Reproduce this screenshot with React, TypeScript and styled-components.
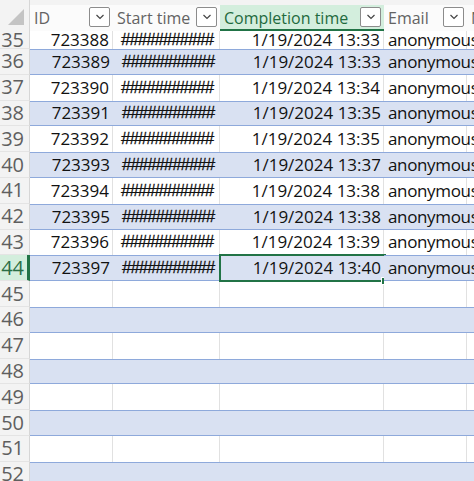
import React from 'react';
import styled, { createGlobalStyle } from 'styled-components';

const Global = createGlobalStyle`
  html, body { margin: 0; padding: 0; background: #ffffff; }
  body { font-family: "Open Sans", "Liberation Sans", sans-serif; }
`;

const COLS = '30px 83px 107px 164px 83px 1fr';
const BAND = '#d9e1f2';
const BAND_LINE = '#8ea9db';
const GRID = '#e1e1e1';
const GREEN = '#217346';
const GREEN_BG = '#d3eedd';

const Sheet = styled.div`
  width: 474px;
  height: 481px;
  overflow: hidden;
  background: #ffffff;
  display: flex;
  flex-direction: column;
`;

const HeaderRow = styled.div`
  display: grid;
  grid-template-columns: ${COLS};
  height: 31px;
  flex: none;
  background: #f3f3f3;
`;

const Corner = styled.div`
  background: #f3f3f3;
  border-right: 1px solid #d6d6d6;
  box-sizing: border-box;
  display: flex;
  align-items: flex-end;
  justify-content: flex-end;
  padding: 0 5px 6px 0;
`;

const HeaderCell = styled.div<{ $selected?: boolean }>`
  margin-top: 5px;
  display: flex;
  align-items: center;
  justify-content: space-between;
  padding: 0 3px 0 4px;
  box-sizing: border-box;
  background: ${(p) => (p.$selected ? GREEN_BG : '#fbfbfb')};
  color: ${(p) => (p.$selected ? '#1f6a3e' : '#636363')};
  border-bottom: 2px solid ${(p) => (p.$selected ? GREEN : 'transparent')};
  font-size: 16px;
  white-space: nowrap;
  overflow: hidden;
`;

const HeaderText = styled.span`
  line-height: 1;
  padding-top: 1px;
`;

const FilterButton = styled.div`
  width: 21px;
  height: 20px;
  flex: none;
  box-sizing: border-box;
  background: #ffffff;
  border: 1px solid #8c8c8c;
  border-radius: 2px;
  display: flex;
  align-items: center;
  justify-content: center;
`;

const Row = styled.div<{ $h: number }>`
  display: grid;
  grid-template-columns: ${COLS};
  height: ${(p) => p.$h}px;
  flex: none;
`;

const RowLabel = styled.div<{ $active?: boolean }>`
  background: ${(p) => (p.$active ? GREEN_BG : '#f3f3f3')};
  color: ${(p) => (p.$active ? '#2a6e45' : '#5f5f5f')};
  font-size: 20px;
  line-height: 1;
  display: flex;
  align-items: center;
  justify-content: flex-end;
  padding-right: ${(p) => (p.$active ? '3px' : '5px')};
  border-bottom: 1px solid #e4e4e4;
  border-right: ${(p) => (p.$active ? `3px solid ${GREEN}` : '1px solid #d6d6d6')};
  box-sizing: border-box;
  overflow: hidden;
  white-space: nowrap;
`;

const Cell = styled.div<{
  $band: boolean;
  $align?: 'left' | 'right';
  $last?: boolean;
  $overflow?: boolean;
}>`
  position: relative;
  box-sizing: border-box;
  background: ${(p) => (p.$band ? BAND : '#ffffff')};
  border-top: ${(p) => (p.$band ? `1px solid ${BAND_LINE}` : 'none')};
  border-bottom: ${(p) => (p.$band ? `1px solid ${BAND_LINE}` : 'none')};
  border-right: ${(p) => (p.$band || p.$last ? 'none' : `1px solid ${GRID}`)};
  display: flex;
  align-items: center;
  justify-content: ${(p) => (p.$align === 'right' ? 'flex-end' : 'flex-start')};
  padding: 0 ${(p) => (p.$align === 'right' ? '3px' : '0')} 0 ${(p) => (p.$align === 'right' ? '0' : '4px')};
  font-size: 17px;
  line-height: 18px;
  color: #111111;
  white-space: nowrap;
  overflow: ${(p) => (p.$overflow ? 'visible' : 'hidden')};
  z-index: ${(p) => (p.$overflow ? 1 : 0)};
`;

const EmailText = styled.span`
  letter-spacing: -0.35px;
`;

const Hashes = styled.span`
  font-family: "Liberation Sans", Arial, sans-serif;
  font-size: 17px;
  letter-spacing: -1.1px;
  padding-right: 3px;
  -webkit-text-stroke: 0.3px #111111;
`;

const Selection = styled.div`
  position: absolute;
  left: -1px;
  right: -2px;
  top: -2px;
  bottom: -2px;
  border: 2px solid ${GREEN};
  pointer-events: none;
  z-index: 2;
`;

const FillHandle = styled.div`
  position: absolute;
  right: -5px;
  bottom: -5px;
  width: 6px;
  height: 6px;
  background: ${GREEN};
  border: 1px solid #ffffff;
`;

const Chevron = () => (
  <svg width="10" height="6" viewBox="0 0 10 6">
    <path d="M1.5 1 L5 4.5 L8.5 1" fill="none" stroke="#454545" strokeWidth="1.2" />
  </svg>
);

const CornerTriangle = () => (
  <svg width="16" height="16" viewBox="0 0 16 16">
    <polygon points="16,0 16,16 0,16" fill="#c4c4c4" />
  </svg>
);

type Data = { id: string; completion: string };

const data: Record<number, Data> = {
  35: { id: '723388', completion: '1/19/2024 13:33' },
  36: { id: '723389', completion: '1/19/2024 13:33' },
  37: { id: '723390', completion: '1/19/2024 13:34' },
  38: { id: '723391', completion: '1/19/2024 13:35' },
  39: { id: '723392', completion: '1/19/2024 13:35' },
  40: { id: '723393', completion: '1/19/2024 13:37' },
  41: { id: '723394', completion: '1/19/2024 13:38' },
  42: { id: '723395', completion: '1/19/2024 13:38' },
  43: { id: '723396', completion: '1/19/2024 13:39' },
  44: { id: '723397', completion: '1/19/2024 13:40' },
};

const rows = Array.from({ length: 18 }, (_, i) => 35 + i);

export default function App() {
  return (
    <>
      <Global />
      <Sheet>
        <HeaderRow>
          <Corner>
            <CornerTriangle />
          </Corner>
          <HeaderCell>
            <HeaderText>ID</HeaderText>
            <FilterButton>
              <Chevron />
            </FilterButton>
          </HeaderCell>
          <HeaderCell>
            <HeaderText>Start time</HeaderText>
            <FilterButton>
              <Chevron />
            </FilterButton>
          </HeaderCell>
          <HeaderCell $selected>
            <HeaderText>Completion time</HeaderText>
            <FilterButton>
              <Chevron />
            </FilterButton>
          </HeaderCell>
          <HeaderCell>
            <HeaderText>Email</HeaderText>
            <FilterButton>
              <Chevron />
            </FilterButton>
          </HeaderCell>
          <HeaderCell>
            <HeaderText>Name</HeaderText>
          </HeaderCell>
        </HeaderRow>
        {rows.map((n) => {
          const band = n % 2 === 0;
          const d = data[n];
          const active = n === 44;
          return (
            <Row key={n} $h={n === 35 ? 18 : 25.8}>
              <RowLabel $active={active}>{n}</RowLabel>
              <Cell $band={band} $align="right">
                {d?.id}
              </Cell>
              <Cell $band={band} $align="right">
                {d && <Hashes>###########</Hashes>}
              </Cell>
              <Cell $band={band} $align="right" $overflow={active}>
                {d?.completion}
                {active && (
                  <Selection>
                    <FillHandle />
                  </Selection>
                )}
              </Cell>
              <Cell $band={band} $align="left" $overflow>
                {d && <EmailText>anonymous</EmailText>}
              </Cell>
              <Cell $band={band} $last />
            </Row>
          );
        })}
      </Sheet>
    </>
  );
}
